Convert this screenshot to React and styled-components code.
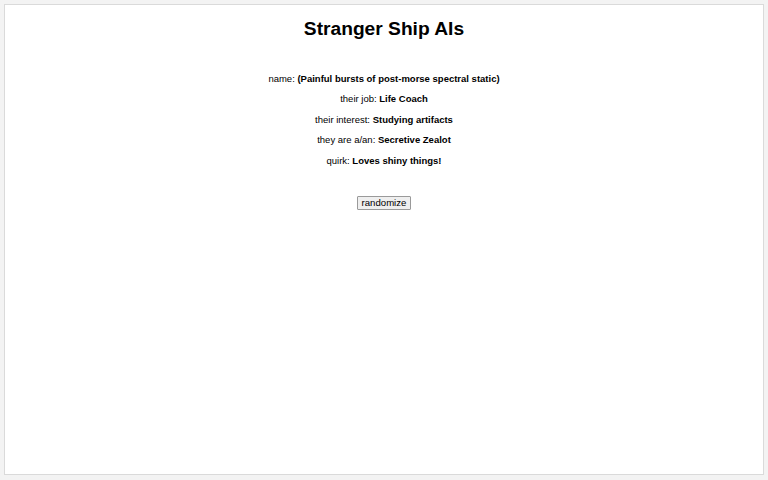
import React, { useState } from 'react'
import styled, { createGlobalStyle } from 'styled-components'

const GlobalStyle = createGlobalStyle`
    html, body {
        margin: 0;
        background: #f3f3f3;
    }
    body {
        padding: 4px;
        font-family: "Liberation Sans", Arial, sans-serif;
        color: #000;
    }
`;

const Card = styled.div`
    background: white;
    border: 1px solid #dadada;
    box-sizing: border-box;
    height: 471px;
    padding-top: 12px;
    text-align: center;
`;

const Title = styled.h1`
    font-size: 19.2px;
    font-weight: 700;
    line-height: 24px;
    margin: 0 0 28px 0;
`;

const Trait = styled.div`
    font-size: 9.5px;
    line-height: 20.4px;
    b {
        font-weight: 700;
    }
`;

const ButtonRow = styled.div`
    margin-top: 21px;
`;

const RandomButton = styled.button`
    font-family: "Liberation Sans", Arial, sans-serif;
    font-size: 9.6px;
    line-height: 12px;
    padding: 0 3.5px;
    background: #efefef;
    border: 1px solid #9a9a9a;
    border-radius: 1px;
    color: #000;
`;

const names = [
    '(Painful bursts of post-morse spectral static)',
    'Quiet Hum of the Deep',
    'Seventeen Blinking Lights',
];
const jobs = ['Life Coach', 'Navigator', 'Cargo Auditor'];
const interests = ['Studying artifacts', 'Collecting star charts', 'Old radio plays'];
const types = ['Secretive Zealot', 'Cheerful Nihilist', 'Anxious Pilot'];
const quirks = ['Loves shiny things!', 'Hums when thinking', 'Counts everything'];

const pick = (arr) => arr[Math.floor(Math.random() * arr.length)];

export default function App() {
    const [ai, setAi] = useState({
        name: names[0],
        job: jobs[0],
        interest: interests[0],
        type: types[0],
        quirk: quirks[0],
    });

    const randomize = () => setAi({
        name: pick(names),
        job: pick(jobs),
        interest: pick(interests),
        type: pick(types),
        quirk: pick(quirks),
    });

    return (
        <>
            <GlobalStyle />
            <Card>
                <Title>Stranger Ship AIs</Title>
                <Trait>name: <b>{ai.name}</b></Trait>
                <Trait>their job: <b>{ai.job}</b></Trait>
                <Trait>their interest: <b>{ai.interest}</b></Trait>
                <Trait>they are a/an: <b>{ai.type}</b></Trait>
                <Trait>quirk: <b>{ai.quirk}</b></Trait>
                <ButtonRow>
                    <RandomButton onClick={randomize}>randomize</RandomButton>
                </ButtonRow>
            </Card>
        </>
    );
}
